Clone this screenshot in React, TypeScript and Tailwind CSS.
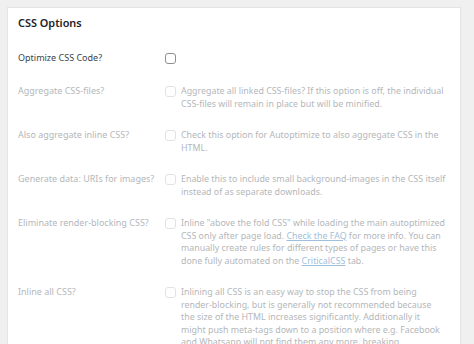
import type { ReactNode } from 'react'

type Row = {
  label: string
  lines: ReactNode[]
}

const link = 'text-[#9fc0dc] underline'

const rows: Row[] = [
  {
    label: 'Aggregate CSS-files?',
    lines: [
      'Aggregate all linked CSS-files? If this option is off, the individual',
      'CSS-files will remain in place but will be minified.',
    ],
  },
  {
    label: 'Also aggregate inline CSS?',
    lines: ['Check this option for Autoptimize to also aggregate CSS in the', 'HTML.'],
  },
  {
    label: 'Generate data: URIs for images?',
    lines: [
      'Enable this to include small background-images in the CSS itself',
      'instead of as separate downloads.',
    ],
  },
  {
    label: 'Eliminate render-blocking CSS?',
    lines: [
      'Inline "above the fold CSS" while loading the main autoptimized',
      <>
        CSS only after page load. <span className={link}>Check the FAQ</span> for more info. You can
      </>,
      'manually create rules for different types of pages or have this',
      <>
        done fully automated on the <span className={link}>CriticalCSS</span> tab.
      </>,
    ],
  },
  {
    label: 'Inline all CSS?',
    lines: [
      'Inlining all CSS is an easy way to stop the CSS from being',
      'render-blocking, but is generally not recommended because',
      'the size of the HTML increases significantly. Additionally it',
      'might push meta-tags down to a position where e.g. Facebook',
      'and Whatsapp will not find them any more, breaking',
      'their preview functionality.',
    ],
  },
]

function Checkbox({ enabled }: { enabled?: boolean }) {
  return (
    <span
      className={`mt-[0.75px] block h-[11px] w-[11px] shrink-0 rounded-[3px] border bg-white ${
        enabled ? 'border-[#8c8f94]' : 'border-[#e1e2e4]'
      }`}
    />
  )
}

export default function App() {
  return (
    <div
      className="h-[344px] overflow-hidden bg-[#f0f0f1] pl-[7px] pt-[7px] pr-[13px]"
      style={{ fontFamily: '"Noto Sans", "Open Sans", sans-serif' }}
    >
      <div className="min-h-[400px] border border-[#e3e4e6] bg-white pl-[10px] pr-[10px] pt-[7px]">
        <h2 className="text-[10.9px] font-semibold leading-4 text-[#1d2327]">CSS Options</h2>

        <div className="mt-[10px] flex items-center py-[11px] text-[9px] leading-[12.5px]">
          <div className="w-[147px] shrink-0 text-[#3c434a]">Optimize CSS Code?</div>
          <Checkbox enabled />
        </div>

        {rows.map((row) => (
          <div key={row.label} className="flex py-[9.5px] leading-[12.5px] text-[#b4b7ba]">
            <div className="w-[147px] shrink-0 text-[9px]">{row.label}</div>
            <Checkbox />
            <div className="ml-[5px] whitespace-nowrap text-[8.85px]">
              {row.lines.map((line, i) => (
                <div key={i}>{line}</div>
              ))}
            </div>
          </div>
        ))}
      </div>
    </div>
  )
}
